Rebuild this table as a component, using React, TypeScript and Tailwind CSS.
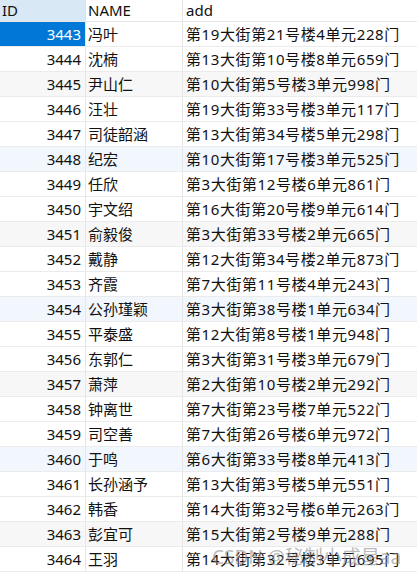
import React from "react";

const rows: [number, string, string][] = [
  [3443, "冯叶", "第19大街第21号楼4单元228门"],
  [3444, "沈楠", "第13大街第10号楼8单元659门"],
  [3445, "尹山仁", "第10大街第5号楼3单元998门"],
  [3446, "汪壮", "第19大街第33号楼3单元117门"],
  [3447, "司徒韶涵", "第13大街第34号楼5单元298门"],
  [3448, "纪宏", "第10大街第17号楼3单元525门"],
  [3449, "任欣", "第3大街第12号楼6单元861门"],
  [3450, "宇文绍", "第16大街第20号楼9单元614门"],
  [3451, "俞毅俊", "第3大街第33号楼2单元665门"],
  [3452, "戴静", "第12大街第34号楼2单元873门"],
  [3453, "齐霞", "第7大街第11号楼4单元243门"],
  [3454, "公孙瑾颖", "第3大街第38号楼1单元634门"],
  [3455, "平泰盛", "第12大街第8号楼1单元948门"],
  [3456, "东郭仁", "第3大街第31号楼3单元679门"],
  [3457, "萧萍", "第2大街第10号楼2单元292门"],
  [3458, "钟离世", "第7大街第23号楼7单元522门"],
  [3459, "司空善", "第7大街第26号楼6单元972门"],
  [3460, "于鸣", "第6大街第33号楼8单元413门"],
  [3461, "长孙涵予", "第13大街第3号楼5单元551门"],
  [3462, "韩香", "第14大街第32号楼6单元263门"],
  [3463, "彭宜可", "第15大街第2号楼9单元288门"],
  [3464, "王羽", "第14大街第32号楼3单元695门"],
];

export default function App() {
  return (
    <div
      className="relative w-[417px] h-[579px] overflow-hidden bg-white text-[15px] text-[#111]"
      style={{ fontFamily: '"Noto Sans", "Noto Sans CJK SC", sans-serif' }}
    >
      <div className="flex h-[22px] border-b border-[#e6e6e6] leading-[21px]">
        <div className="w-[86px] shrink-0 bg-[#d9e8f5] border-r border-[#e0e0e0] pl-[2px]">ID</div>
        <div className="w-[97px] shrink-0 border-r border-[#e6e6e6] pl-[2px]">NAME</div>
        <div className="flex-1 pl-[3px]">add</div>
      </div>
      {rows.map(([id, name, addr], i) => {
        const selected = i === 0;
        let bg = "bg-white";
        if (i >= 2 && (i - 2) % 3 === 0) {
          bg = ((i - 2) / 3) % 2 === 0 ? "bg-[#f7f7f7]" : "bg-[#f1f7fd]";
        }
        return (
          <div key={id} className={`flex h-[25px] border-b border-[#ebebeb] leading-[24px] ${bg}`}>
            <div
              className={`w-[86px] shrink-0 border-r border-[#e6e6e6] text-right pr-[4px] ${
                selected ? "bg-[#0078d7] text-white" : ""
              }`}
            >
              {id}
            </div>
            <div className="w-[97px] shrink-0 border-r border-[#e6e6e6] pl-[2px] whitespace-nowrap">{name}</div>
            <div className="flex-1 pl-[3px] whitespace-nowrap tracking-[0.6px]">{addr}</div>
          </div>
        );
      })}
      <div className="absolute left-[212px] top-[544px] text-[19px] leading-[26px] text-[#8c8c8c]/60 whitespace-nowrap">
        CSDN @秘制小成星aa
      </div>
    </div>
  );
}
